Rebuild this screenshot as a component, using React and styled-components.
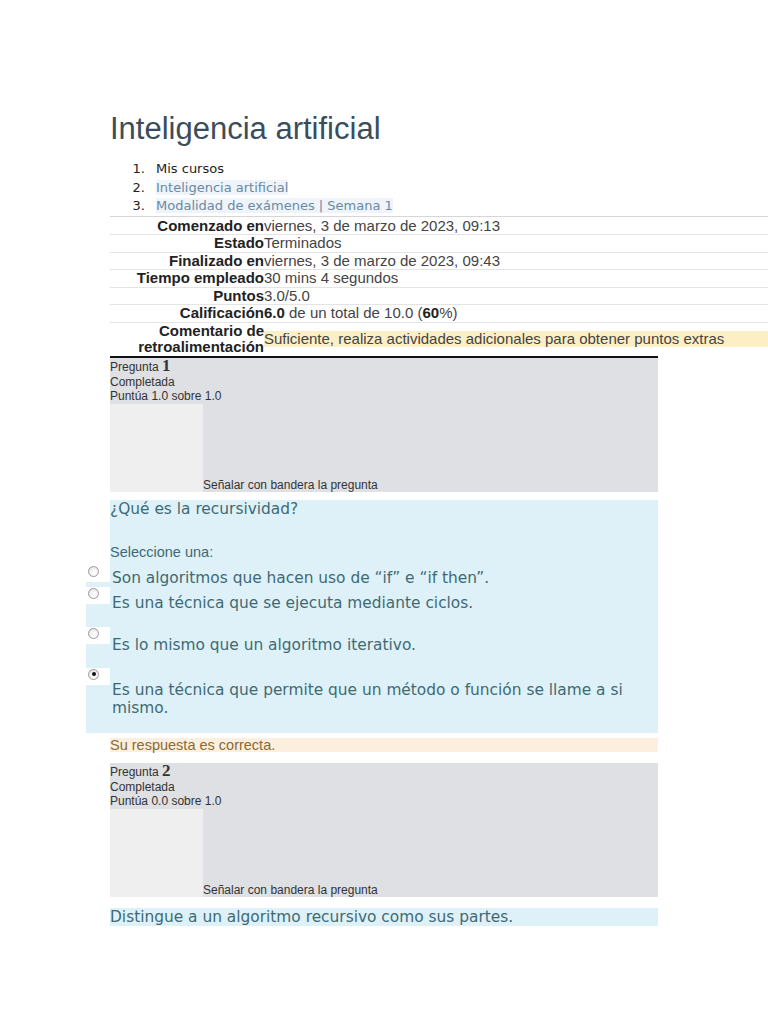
import React from "react";
import styled, { createGlobalStyle } from "styled-components";

const GlobalStyle = createGlobalStyle`
  html, body {
    margin: 0;
    padding: 0;
    background: #ffffff;
    overflow: hidden;
  }
  body {
    font-family: "Liberation Sans", Arial, sans-serif;
  }
`;

const Page = styled.div`
  padding: 111px 0 40px 110px;
  width: 658px;
`;

const Title = styled.h1`
  margin: 0;
  font-family: "Liberation Sans", Arial, sans-serif;
  font-weight: normal;
  font-size: 31px;
  line-height: 36px;
  color: #3b4d5a;
`;

const Crumbs = styled.ol`
  margin: 13px 0 0 0;
  padding-left: 39px;
  font-family: "DejaVu Sans", Verdana, sans-serif;
  font-size: 13px;
  line-height: 18.5px;
  color: #222;
`;

const Crumb = styled.li`
  padding-left: 7px;
  span {
    color: ${p => (p.link ? "#6b89a4" : "#222")};
    background: ${p => (p.link ? "#eef4f9" : "transparent")};
  }
`;

const Summary = styled.div`
  border-top: 1px solid #d6d6d6;
  padding-top: 1px;
  width: 658px;
`;

const Row = styled.div`
  display: grid;
  grid-template-columns: 154px 1fr;
  align-items: center;
  border-bottom: ${p => (p.last ? "none" : "1px solid #e4e4e4")};
  font-size: 15px;
  line-height: 16.5px;
`;

const Label = styled.div`
  text-align: right;
  font-weight: bold;
  color: #222;
`;

const Value = styled.div`
  color: #444;
  white-space: nowrap;
  background: ${p => (p.note ? "#fcefc6" : "transparent")};
  b {
    color: #222;
  }
`;

const Info = styled.div`
  width: 548px;
  background: #dee0e4;
  margin-top: ${p => p.gap}px;
  border-top: ${p => (p.ruled ? "2px solid #111" : "none")};
  font-size: 12px;
  color: #333;
`;

const InfoLine = styled.div`
  line-height: ${p => (p.first ? "16px" : "14px")};
  strong {
    font-family: "Liberation Serif", "Times New Roman", serif;
    font-size: 17px;
    font-weight: bold;
  }
`;

const InfoFoot = styled.div`
  display: flex;
  align-items: flex-end;
  margin-top: 1px;
`;

const InfoBox = styled.div`
  width: 93px;
  height: 88px;
  background: #efefef;
`;

const Flag = styled.div`
  line-height: 14px;
`;

const Prompt = styled.div`
  width: 548px;
  margin-top: ${p => p.gap}px;
  background: #def1f8;
  font-family: "DejaVu Sans", Verdana, sans-serif;
  font-size: 15.4px;
  line-height: 18px;
  color: #3e6a74;
  padding-bottom: ${p => p.pad || 0}px;
`;

const Choose = styled.div`
  margin-top: 26px;
  font-family: "Liberation Sans", Arial, sans-serif;
  font-size: 14.5px;
  line-height: 17px;
  color: #3e6a74;
`;

const Answers = styled.div`
  width: 572px;
  margin-left: -24px;
  background: #def1f8;
  padding-bottom: 16px;
`;

const Answer = styled.div`
  display: flex;
  align-items: flex-start;
  margin-top: ${p => p.gap}px;
`;

const RadioCell = styled.div`
  flex: none;
  width: 24px;
  height: 17px;
  background: #ffffff;
  display: flex;
  justify-content: flex-start;
  padding: 1px 0 0 2px;
  box-sizing: border-box;
`;

const Radio = styled.span`
  width: 9px;
  height: 9px;
  border-radius: 50%;
  border: 1px solid #9a9a9a;
  background: radial-gradient(circle at 60% 65%, #ffffff 0%, #f1f1f1 55%, #cfcfcf 100%);
  display: flex;
  align-items: center;
  justify-content: center;
  &::after {
    content: "";
    width: 4px;
    height: 4px;
    border-radius: 50%;
    background: ${p => (p.checked ? "#111" : "transparent")};
  }
`;

const AnswerText = styled.div`
  margin-top: ${p => p.offset}px;
  padding-left: 2px;
  padding-right: 12px;
  font-family: "DejaVu Sans", Verdana, sans-serif;
  font-size: 15.4px;
  line-height: 18px;
  color: #3e6a74;
`;

const Feedback = styled.div`
  width: 548px;
  margin-top: 5px;
  background: #fcefdd;
  font-size: 14.5px;
  line-height: 14px;
  color: #8a6a35;
`;

const summary = [
  ["Comenzado en", "viernes, 3 de marzo de 2023, 09:13"],
  ["Estado", "Terminados"],
  ["Finalizado en", "viernes, 3 de marzo de 2023, 09:43"],
  ["Tiempo empleado", "30 mins 4 segundos"],
  ["Puntos", "3.0/5.0"],
];

const answers = [
  { text: "Son algoritmos que hacen uso de “if” e “if then”.", gap: 0, offset: 4 },
  { text: "Es una técnica que se ejecuta mediante ciclos.", gap: 0, offset: 7 },
  { text: "Es lo mismo que un algoritmo iterativo.", gap: 15, offset: 9 },
  {
    text: "Es una técnica que permite que un método o función se llame a si mismo.",
    gap: 14,
    offset: 13,
    checked: true,
  },
];

const QuestionInfo = ({ n, score, gap, ruled }) => (
  <Info gap={gap} ruled={ruled}>
    <InfoLine first>
      Pregunta <strong>{n}</strong>
    </InfoLine>
    <InfoLine>Completada</InfoLine>
    <InfoLine>Puntúa {score} sobre 1.0</InfoLine>
    <InfoFoot>
      <InfoBox />
      <Flag>Señalar con bandera la pregunta</Flag>
    </InfoFoot>
  </Info>
);

export default function App() {
  return (
    <Page>
      <GlobalStyle />
      <Title>Inteligencia artificial</Title>
      <Crumbs>
        <Crumb><span>Mis cursos</span></Crumb>
        <Crumb link><span>Inteligencia artificial</span></Crumb>
        <Crumb link><span>Modalidad de exámenes | Semana 1</span></Crumb>
      </Crumbs>

      <Summary>
        {summary.map(([k, v]) => (
          <Row key={k}>
            <Label>{k}</Label>
            <Value>{v}</Value>
          </Row>
        ))}
        <Row>
          <Label>Calificación</Label>
          <Value>
            <b>6.0</b> de un total de 10.0 (<b>60</b>%)
          </Value>
        </Row>
        <Row last>
          <Label>
            Comentario de
            <br />
            retroalimentación
          </Label>
          <Value note>Suficiente, realiza actividades adicionales para obtener puntos extras</Value>
        </Row>
      </Summary>

      <QuestionInfo n="1" score="1.0" gap={0} ruled />
      <Prompt gap={8} pad={4}>
        ¿Qué es la recursividad?
        <Choose>Seleccione una:</Choose>
      </Prompt>
      <Answers>
        {answers.map(a => (
          <Answer key={a.text} gap={a.gap}>
            <RadioCell>
              <Radio checked={a.checked} />
            </RadioCell>
            <AnswerText offset={a.offset}>{a.text}</AnswerText>
          </Answer>
        ))}
      </Answers>
      <Feedback>Su respuesta es correcta.</Feedback>

      <QuestionInfo n="2" score="0.0" gap={11} />
      <Prompt gap={11}>Distingue a un algoritmo recursivo como sus partes.</Prompt>
    </Page>
  );
}
